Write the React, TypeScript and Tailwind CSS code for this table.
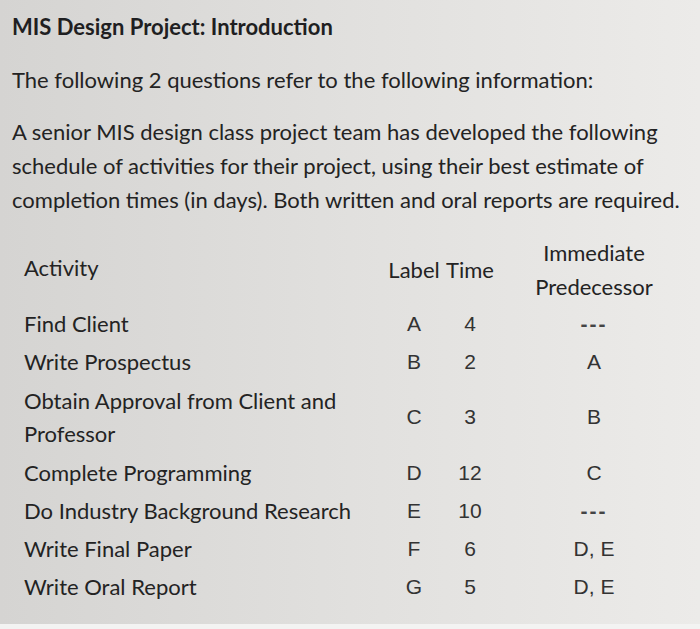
const rows = [
  { activity: 'Find Client', label: 'A', time: '4', pred: '---' },
  { activity: 'Write Prospectus', label: 'B', time: '2', pred: 'A' },
  { activity: 'Obtain Approval from Client and Professor', label: 'C', time: '3', pred: 'B', tall: true },
  { activity: 'Complete Programming', label: 'D', time: '12', pred: 'C' },
  { activity: 'Do Industry Background Research', label: 'E', time: '10', pred: '---' },
  { activity: 'Write Final Paper', label: 'F', time: '6', pred: 'D, E' },
  { activity: 'Write Oral Report', label: 'G', time: '5', pred: 'D, E' },
];

export default function App() {
  return (
    <div className="w-[700px] h-[629px] flex flex-col overflow-hidden bg-gradient-to-r from-[#d5d4d2] via-[#e1e0de] to-[#ecebe9] text-[#232323] font-['Lato',sans-serif]">
      <div className="flex-1 pl-3 pt-3">
        <h1 className="text-[22px] leading-[30px] font-bold text-[#1f1f22]">MIS Design Project: Introduction</h1>

        <p className="mt-[21px] text-[22px] leading-[34px]">
          The following 2 questions refer to the following information:
        </p>

        <p className="mt-[18px] w-[680px] text-[22px] leading-[34px]">
          A senior MIS design class project team has developed the following schedule of activities for their project, using
          their best estimate of completion times (in days). Both written and oral reports are required.
        </p>

        <div className="mt-[14px] ml-3 grid grid-cols-[368px_44px_68px_180px] text-[22px] leading-[33px]">
          <div className="py-[2px] flex items-center">Activity</div>
          <div className="pt-[4px] pb-0 flex items-center justify-center">Label</div>
          <div className="pt-[4px] pb-0 flex items-center justify-center">Time</div>
          <div className="pt-[5px] pb-0 flex flex-col items-center justify-center leading-[34px]">
            <span>Immediate</span>
            <span>Predecessor</span>
          </div>

          {rows.map((r) => {
            const pad = r.tall ? 'py-[3.5px]' : 'py-[2.5px]';
            const dash = r.pred === '---' ? 'tracking-[2px] font-bold text-[#444]' : '';
            return (
              <div key={r.label} className="contents">
                <div className={`${pad} pr-4 flex items-center`}>{r.activity}</div>
                <div className={`${pad} flex items-center justify-center font-['Liberation_Sans',sans-serif] text-[21px] text-[#333]`}>
                  {r.label}
                </div>
                <div className={`${pad} flex items-center justify-center font-['Liberation_Sans',sans-serif] text-[21px] text-[#333]`}>
                  {r.time}
                </div>
                <div className={`${pad} flex items-center justify-center font-['Liberation_Sans',sans-serif] text-[21px] text-[#333]`}>
                  <span className={dash}>{r.pred}</span>
                </div>
              </div>
            );
          })}
        </div>
      </div>
      <div className="h-[5px] bg-[#f3f3f2]" />
    </div>
  );
}
